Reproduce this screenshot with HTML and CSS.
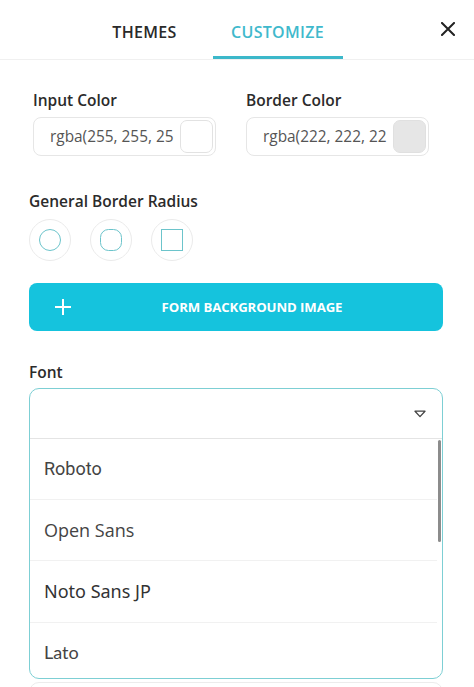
FILE: index.html
```html
<!DOCTYPE html>
<html>
<head>
<meta charset="utf-8">
<link rel="stylesheet" href="styles.css">
</head>
<body>
<div class="panel">
  <header class="header">
    <nav class="tabs">
      <div class="tab">THEMES</div>
      <div class="tab active">CUSTOMIZE</div>
    </nav>
    <div class="close">
      <svg width="14" height="14" viewBox="0 0 14 14"><path d="M1 1L13 13M13 1L1 13" stroke="#222" stroke-width="2" fill="none" stroke-linecap="square"/></svg>
    </div>
  </header>

  <main class="content">
    <div class="color-row">
      <div class="field">
        <div class="label">Input Color</div>
        <div class="color-input">
          <span class="color-text">rgba(255, 255, 25</span>
          <span class="swatch swatch-white"></span>
        </div>
      </div>
      <div class="field">
        <div class="label">Border Color</div>
        <div class="color-input">
          <span class="color-text">rgba(222, 222, 22</span>
          <span class="swatch swatch-gray"></span>
        </div>
      </div>
    </div>

    <div class="label radius-label">General Border Radius</div>
    <div class="radius-row">
      <div class="radius-opt"><span class="shape shape-circle"></span></div>
      <div class="radius-opt"><span class="shape shape-rounded"></span></div>
      <div class="radius-opt"><span class="shape shape-square"></span></div>
    </div>

    <div class="bg-button">
      <svg class="plus" width="18" height="18" viewBox="0 0 18 18"><path d="M9 1V17M1 9H17" stroke="#fff" stroke-width="2" fill="none"/></svg>
      <span class="bg-text">FORM BACKGROUND IMAGE</span>
    </div>

    <div class="label font-label">Font</div>
    <div class="select">
      <div class="select-head">
        <svg class="caret" width="12" height="8" viewBox="0 0 12 8"><path d="M1 1.2H11L6 6.6Z" stroke="#444" stroke-width="1.3" fill="none" stroke-linejoin="round"/></svg>
      </div>
      <div class="options">
        <div class="option f-roboto">Roboto</div>
        <div class="option f-open">Open Sans</div>
        <div class="option f-noto">Noto Sans JP</div>
        <div class="option f-lato">Lato</div>
        <div class="scroll-thumb"></div>
      </div>
    </div>
    <div class="next-field"></div>
  </main>
</div>
</body>
</html>
```

FILE: styles.css
```css
* { box-sizing: border-box; }
html, body { margin: 0; padding: 0; background: #fff; }
body {
  font-family: "Open Sans", "Noto Sans", sans-serif;
  color: #222;
  width: 474px;
  height: 687px;
  overflow: hidden;
}
.header {
  display: flex;
  height: 60px;
  border-bottom: 1px solid #f0f0f0;
}
.tabs {
  flex: 1;
  display: flex;
  justify-content: center;
  gap: 3px;
}
.tab {
  width: 130px;
  display: flex;
  align-items: center;
  justify-content: center;
  font-size: 16px;
  font-weight: 600;
  letter-spacing: 0.3px;
  color: #2a2a2a;
  border-bottom: 3px solid transparent;
  padding-top: 8px;
}
.tab.active {
  color: #3fb9cc;
  border-bottom-color: #3cb8ca;
}
.close {
  width: 52px;
  display: flex;
  align-items: center;
  justify-content: center;
  padding-bottom: 2px;
}
.content {
  padding: 0 31px 0 29px;
}
.color-row {
  display: grid;
  grid-template-columns: 183px 183px;
  column-gap: 30px;
  padding-left: 4px;
  margin-top: 29px;
}
.label {
  font-size: 15.5px;
  font-weight: 600;
  color: #2b2b2b;
  line-height: 22px;
}
.field .label { margin-bottom: 6px; }
.color-input {
  height: 39px;
  border: 1px solid #e6e6e6;
  border-radius: 8px;
  display: flex;
  align-items: center;
  justify-content: space-between;
  padding: 0 2px 0 16px;
  overflow: hidden;
}
.color-text {
  flex: none;
  white-space: nowrap;
  font-size: 15.4px;
  color: #555;
}
.swatch {
  flex: none;
  width: 33px;
  height: 33px;
  border-radius: 7px;
}
.swatch-white { background: #fff; border: 1px solid #e2e2e2; }
.swatch-gray { background: #e6e6e6; border: 1px solid #e0e0e0; }
.radius-label { margin-top: 34px; }
.radius-row {
  display: flex;
  gap: 19px;
  margin-top: 7px;
}
.radius-opt {
  width: 42px;
  height: 42px;
  border-radius: 50%;
  border: 1.5px solid #ebebeb;
  display: flex;
  align-items: center;
  justify-content: center;
}
.shape {
  width: 22px;
  height: 22px;
  border: 1.5px solid #6cc4cb;
}
.shape-circle { border-radius: 50%; }
.shape-rounded { border-radius: 8.5px; }
.shape-square { border-radius: 0; }
.bg-button {
  margin-top: 22px;
  height: 48px;
  border-radius: 8px;
  background: #15c3dd;
  display: flex;
  align-items: center;
  padding: 0 11px 0 25px;
}
.plus { flex: none; }
.bg-text {
  flex: 1;
  text-align: center;
  color: #fff;
  font-weight: 700;
  font-size: 13.2px;
  letter-spacing: -0.1px;
}
.font-label { margin-top: 30px; }
.select {
  margin-top: 5px;
  height: 291px;
  border: 1.5px solid #7dcfd4;
  border-radius: 10px;
  overflow: hidden;
  display: flex;
  flex-direction: column;
}
.select-head {
  height: 50px;
  flex: none;
  display: flex;
  align-items: center;
  justify-content: flex-end;
  padding-right: 16px;
  border-bottom: 1px solid #e4e4e4;
}
.options {
  position: relative;
  flex: 1;
  overflow: hidden;
}
.option {
  flex: none;
  height: 61.2px;
  display: flex;
  align-items: center;
  padding-left: 14px;
  padding-bottom: 1px;
  margin-right: 5px;
  font-size: 18px;
  color: #444;
  border-bottom: 1px solid #f1f1f1;
}
.f-roboto { font-family: Roboto, sans-serif; }
.f-open { font-family: "Open Sans", sans-serif; }
.f-noto { font-family: "Noto Sans", "Noto Sans CJK JP", sans-serif; color: #333; }
.f-lato { font-family: Lato, sans-serif; }
.scroll-thumb {
  position: absolute;
  right: 1px;
  top: 1px;
  width: 3px;
  height: 102px;
  background: #8c8c8c;
  border-radius: 2px;
}
.next-field {
  margin-top: 3px;
  height: 20px;
  border: 1px solid #ececec;
  border-radius: 10px 10px 0 0;
}
```
